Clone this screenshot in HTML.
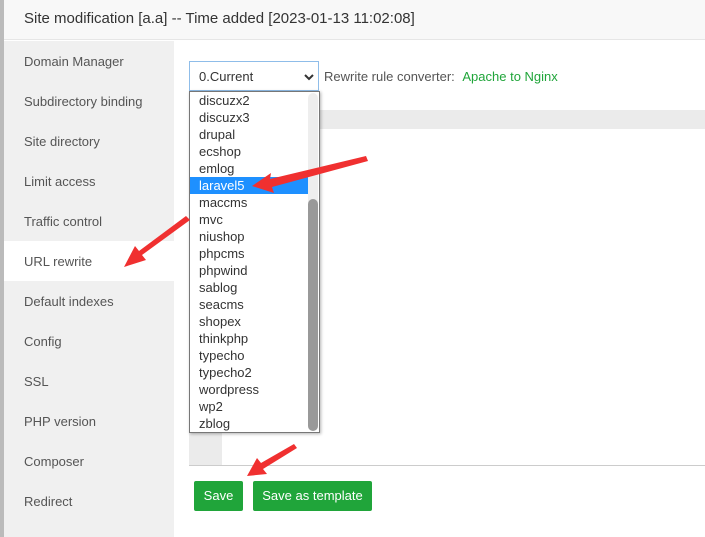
<!DOCTYPE html>
<html><head><style>
*{margin:0;padding:0;box-sizing:border-box}
body{width:705px;height:537px;overflow:hidden;background:#fff;font-family:"Liberation Sans",sans-serif;position:relative}
.strip{position:absolute;left:0;top:0;width:4px;height:537px;background:#bbb}
.hdr{position:absolute;left:4px;top:0;width:701px;height:40px;background:#f8f8f8;border-bottom:1px solid #e6e6e6;font-size:15px;color:#333;line-height:38px;padding-left:20px}
.side{position:absolute;left:4px;top:41px;width:170px;height:496px;background:#f0f0f0}
.side div{height:40px;line-height:42px;padding-left:20px;font-size:13px;color:#555}
.side .on{background:#fff}
.sel{position:absolute;left:189px;top:61px;width:130px;height:30px;border:1px solid #8fbde9;font-size:13px;color:#333;line-height:30px;padding-left:9px;background:#fff}
.sel svg{position:absolute;right:4px;top:11px}
.conv{position:absolute;left:324px;top:69px;font-size:13px;color:#555}
.conv span{color:#20a53a;margin-left:4px}
.ed{position:absolute;left:189px;top:110px;width:516px;height:356px;border-bottom:1px solid #ccc}
.ed .top{height:19px;background:#ebebeb}
.ed .gut{position:absolute;left:0;top:19px;width:33px;bottom:0;background:#ebebeb}
.list{position:absolute;left:189px;top:91px;width:131px;height:342px;border:1px solid #777;background:#fff;box-shadow:1px 1px 3px rgba(0,0,0,.3)}
.list p{height:17px;line-height:17px;font-size:13px;color:#333;padding-left:9px}
.list .hl{background:#1e90ff;color:#fff;width:118px}
.sb{position:absolute;right:1px;top:1px;width:10px;bottom:1px;background:#eee;border-radius:5px}
.th{position:absolute;right:1px;top:107px;width:10px;bottom:1px;background:#999;border-radius:5px}
.btn{position:absolute;top:481px;height:30px;background:#20a53a;color:#fff;font-size:13px;line-height:30px;text-align:center;border-radius:2px}
</style></head><body>
<div class="strip"></div>
<div class="hdr">Site modification [a.a] -- Time added [2023-01-13 11:02:08]</div>
<div class="side">
<div>Domain Manager</div><div>Subdirectory binding</div><div>Site directory</div><div>Limit access</div><div>Traffic control</div><div class="on">URL rewrite</div><div>Default indexes</div><div>Config</div><div>SSL</div><div>PHP version</div><div>Composer</div><div>Redirect</div></div>
<div class="sel">0.Current<svg width="10" height="8" viewBox="0 0 10 8"><path d="M1 2l4 4 4-4" stroke="#333" stroke-width="2" fill="none"/></svg></div>
<div class="conv">Rewrite rule converter: <span>Apache to Nginx</span></div>
<div class="ed"><div class="top"></div><div class="gut"></div></div>
<div class="list">
<p>discuzx2</p><p>discuzx3</p><p>drupal</p><p>ecshop</p><p>emlog</p><p class="hl">laravel5</p><p>maccms</p><p>mvc</p><p>niushop</p><p>phpcms</p><p>phpwind</p><p>sablog</p><p>seacms</p><p>shopex</p><p>thinkphp</p><p>typecho</p><p>typecho2</p><p>wordpress</p><p>wp2</p><p>zblog</p>
<span class="sb"></span><span class="th"></span></div>
<div class="btn" style="left:194px;width:49px">Save</div>
<div class="btn" style="left:253px;width:119px">Save as template</div>
<svg style="position:absolute;left:0;top:0" width="705" height="537">
<g fill="#f03030">
<path d="M366 156 L270 179 L271 173 L252 186 L274 193 L272 187 L368 161Z"/>
<path d="M186 216 L139 251 L135 246 L124 267 L146 260 L142 255 L190 220Z"/>
<path d="M294 444 L261 463 L257 458 L247 476 L267 474 L263 469 L297 448Z"/>
</g></svg>
</body></html>
